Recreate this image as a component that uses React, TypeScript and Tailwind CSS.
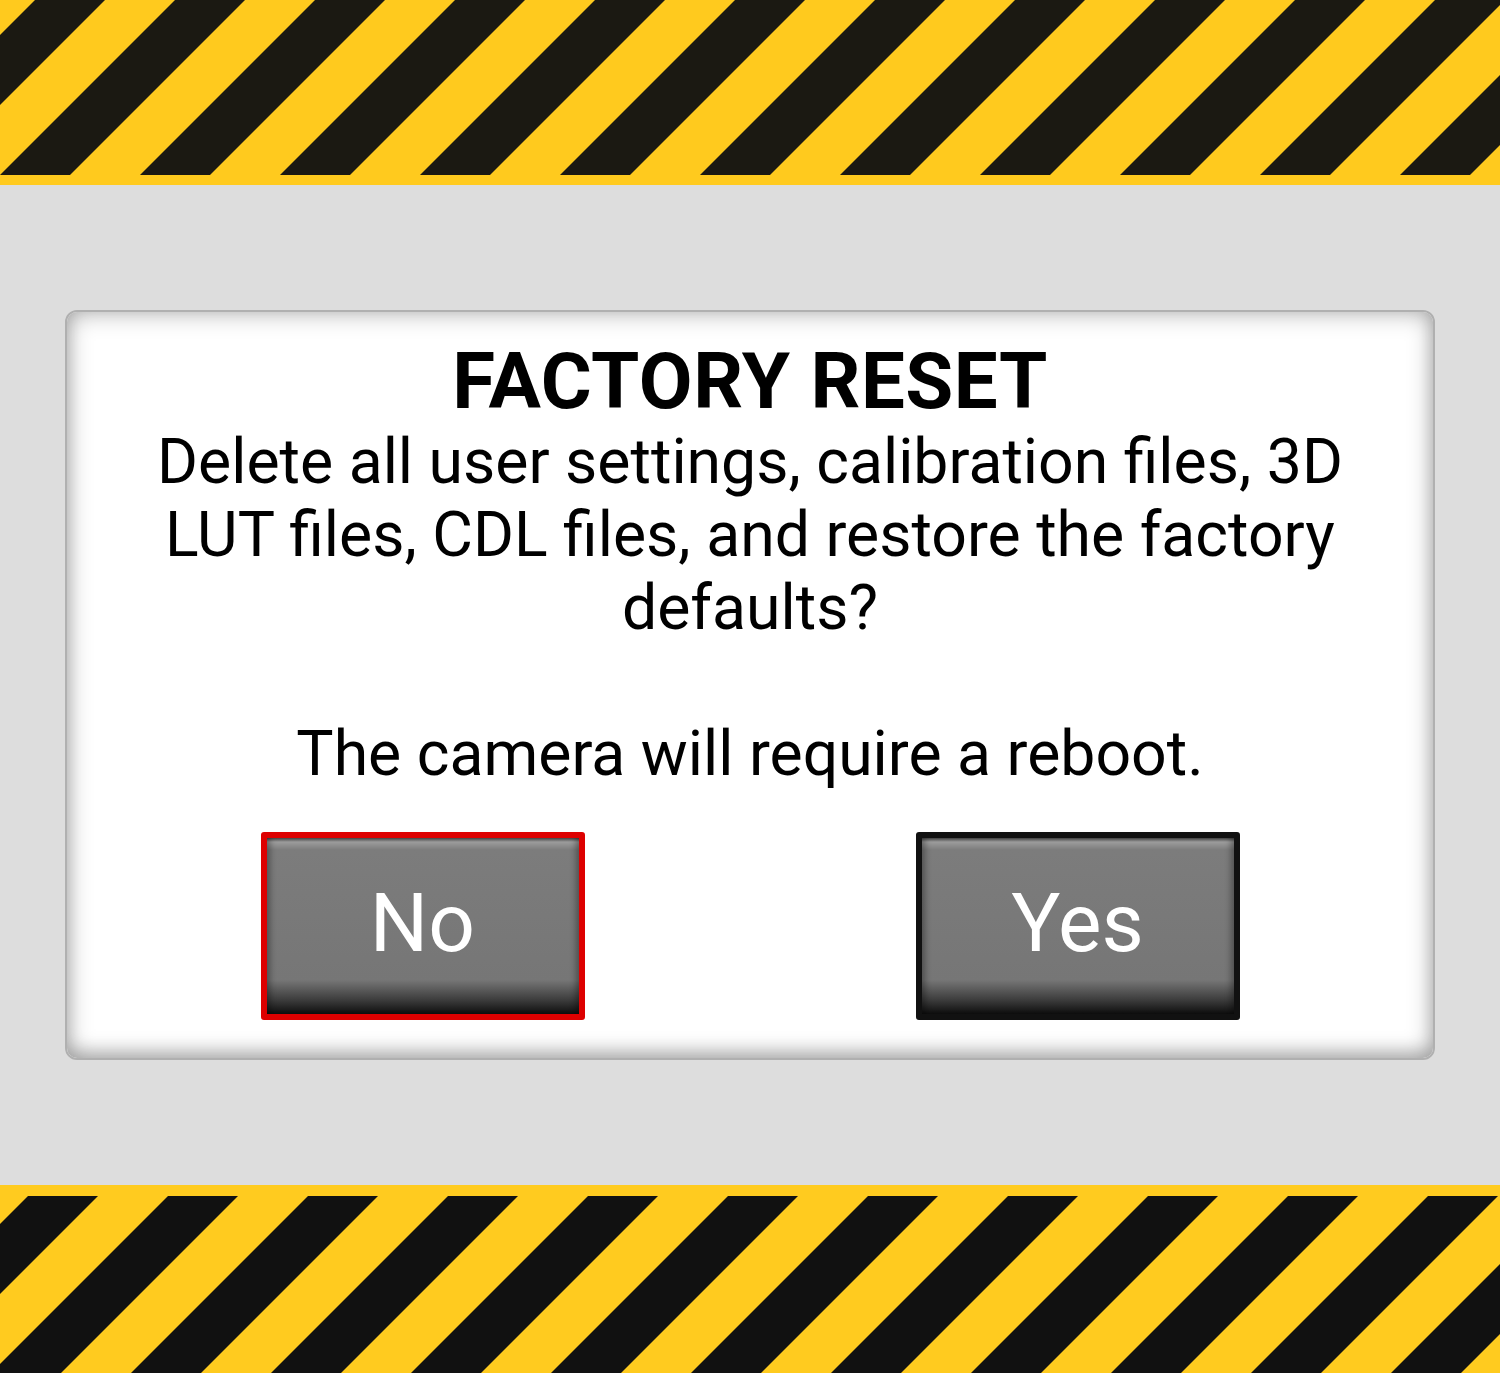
import React from 'react';

// hazard stripe band, stripes run "/" at 45deg, 140px period, 70px black
const Stripes: React.FC<{ height: number; offset: number; dark: string; yellow: string }> = ({ height, offset, dark, yellow }) => {
  const polys = [];
  for (let k = -2; k < 14; k++) {
    const a = offset + 140 * k;
    polys.push(
      <polygon
        key={k}
        points={`${a},0 ${a + 70},0 ${a + 70 - height},${height} ${a - height},${height}`}
        fill={dark}
      />
    );
  }
  return (
    <svg width="1500" height={height} viewBox={`0 0 1500 ${height}`} className="block" style={{ background: yellow }}>
      {polys}
    </svg>
  );
};

const DialogButton: React.FC<{ label: string; focused?: boolean }> = ({ label, focused = false }) => (
  <button
    className={`w-[324px] h-[188px] rounded-[3px] border-[6px] ${
      focused ? 'border-[#dd0000]' : 'border-[#111111]'
    } bg-[linear-gradient(to_bottom,#4a4a4a_0px,#9c9c9c_4px,#7c7c7c_12px,#767676_calc(100%_-_34px),#3c3c3c_calc(100%_-_14px),#0e0e0e_100%)] shadow-[inset_6px_0_6px_-3px_rgba(0,0,0,0.35),inset_-6px_0_6px_-3px_rgba(0,0,0,0.35)] flex items-center justify-center text-white text-[82px] leading-none font-['Roboto',sans-serif] pb-[6px]`}
  >
    {label}
  </button>
);

export default function App() {
  return (
    <div className="w-[1500px] h-[1373px] flex flex-col bg-[#dddddd] font-['Roboto',sans-serif] overflow-hidden">
      {/* top hazard band */}
      <div className="h-[185px] bg-[#ffca1e] shrink-0">
        <Stripes height={175} offset={35} dark="#1b1912" yellow="#ffca1e" />
      </div>

      {/* middle area */}
      <div className="h-[1000px] shrink-0 flex items-center justify-center">
        <div className="w-[1370px] h-[750px] bg-white rounded-[12px] border-2 border-[#b0b0b0] shadow-[inset_0_0_24px_rgba(0,0,0,0.34),inset_0_-8px_16px_rgba(0,0,0,0.14)] flex flex-col items-center pt-[31px]">
          <h1 className="text-[78px] leading-[77px] font-bold text-black tracking-[0.5px]">FACTORY RESET</h1>
          <p className="mt-[5px] text-[62.5px] leading-[73px] text-black text-center">
            Delete all user settings, calibration files, 3D
            <br />
            LUT files, CDL files, and restore the factory
            <br />
            defaults?
            <br />
            <br />
            The camera will require a reboot.
          </p>
          <div className="mt-[42px] flex gap-[331px]">
            <DialogButton label="No" focused />
            <DialogButton label="Yes" />
          </div>
        </div>
      </div>

      {/* bottom hazard band */}
      <div className="h-[188px] bg-[#ffcb1f] shrink-0 pt-[11px]">
        <Stripes height={177} offset={28} dark="#111111" yellow="#ffcb1f" />
      </div>
    </div>
  );
}
